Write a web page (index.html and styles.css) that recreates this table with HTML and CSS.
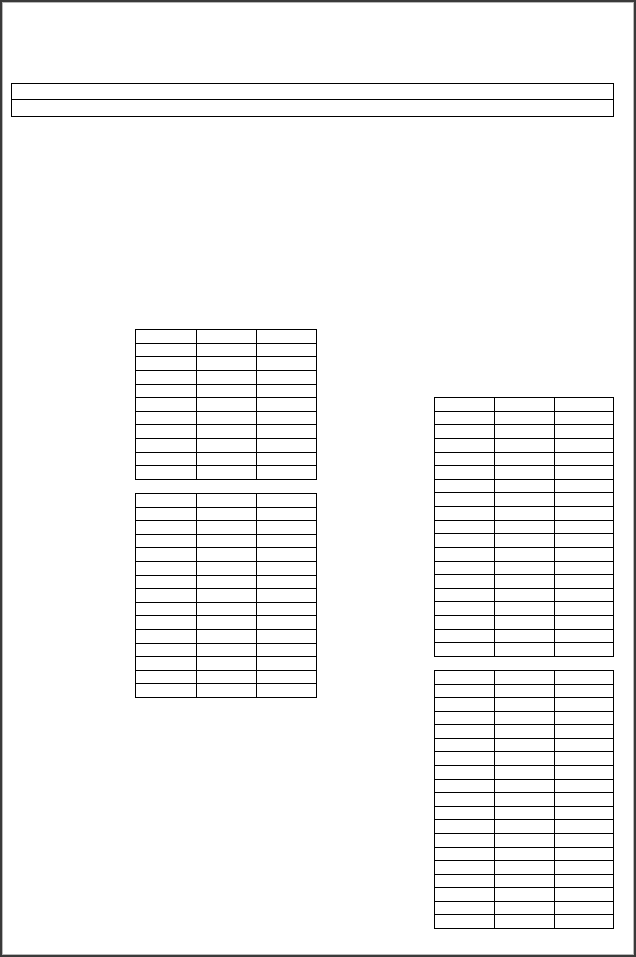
FILE: index.html
```html
<!DOCTYPE html>
<html>
<head>
<meta charset="utf-8">
<link rel="stylesheet" href="styles.css">
</head>
<body>
<div class="page">
  <div class="bar">
    <div class="bar-row r1"></div>
    <div class="bar-row r2"></div>
  </div>
  <div class="columns">
    <div class="col left">
      <div class="grid g-left rows-11">
        <div></div><div></div><div></div>
        <div></div><div></div><div></div>
        <div></div><div></div><div></div>
        <div></div><div></div><div></div>
        <div></div><div></div><div></div>
        <div></div><div></div><div></div>
        <div></div><div></div><div></div>
        <div></div><div></div><div></div>
        <div></div><div></div><div></div>
        <div></div><div></div><div></div>
        <div></div><div></div><div></div>
      </div>
      <div class="grid g-left rows-15">
        <div></div><div></div><div></div>
        <div></div><div></div><div></div>
        <div></div><div></div><div></div>
        <div></div><div></div><div></div>
        <div></div><div></div><div></div>
        <div></div><div></div><div></div>
        <div></div><div></div><div></div>
        <div></div><div></div><div></div>
        <div></div><div></div><div></div>
        <div></div><div></div><div></div>
        <div></div><div></div><div></div>
        <div></div><div></div><div></div>
        <div></div><div></div><div></div>
        <div></div><div></div><div></div>
        <div></div><div></div><div></div>
      </div>
    </div>
    <div class="col right">
      <div class="grid g-right rows-19a">
        <div></div><div></div><div></div>
        <div></div><div></div><div></div>
        <div></div><div></div><div></div>
        <div></div><div></div><div></div>
        <div></div><div></div><div></div>
        <div></div><div></div><div></div>
        <div></div><div></div><div></div>
        <div></div><div></div><div></div>
        <div></div><div></div><div></div>
        <div></div><div></div><div></div>
        <div></div><div></div><div></div>
        <div></div><div></div><div></div>
        <div></div><div></div><div></div>
        <div></div><div></div><div></div>
        <div></div><div></div><div></div>
        <div></div><div></div><div></div>
        <div></div><div></div><div></div>
        <div></div><div></div><div></div>
        <div></div><div></div><div></div>
      </div>
      <div class="grid g-right rows-19b">
        <div></div><div></div><div></div>
        <div></div><div></div><div></div>
        <div></div><div></div><div></div>
        <div></div><div></div><div></div>
        <div></div><div></div><div></div>
        <div></div><div></div><div></div>
        <div></div><div></div><div></div>
        <div></div><div></div><div></div>
        <div></div><div></div><div></div>
        <div></div><div></div><div></div>
        <div></div><div></div><div></div>
        <div></div><div></div><div></div>
        <div></div><div></div><div></div>
        <div></div><div></div><div></div>
        <div></div><div></div><div></div>
        <div></div><div></div><div></div>
        <div></div><div></div><div></div>
        <div></div><div></div><div></div>
        <div></div><div></div><div></div>
      </div>
    </div>
  </div>
</div>
</body>
</html>
```

FILE: styles.css
```css
* {
  box-sizing: border-box;
}

html, body {
  margin: 0;
  padding: 0;
  background: #ffffff;
  font-family: "Liberation Sans", Arial, sans-serif;
}

.page {
  width: 636px;
  height: 957px;
  border: 2px solid #3a3a3a;
  box-shadow: inset 1px 1px 0 #b8b8b8, inset -1px -1px 0 #b8b8b8;
  padding: 81px 0 0 9px;
  background: #ffffff;
  overflow: hidden;
}

.bar {
  width: 603px;
  border-top: 1px solid #000;
  border-left: 1px solid #000;
  display: flex;
  flex-direction: column;
}

.bar-row {
  border-right: 1px solid #000;
  border-bottom: 1px solid #000;
}

.bar-row.r1 {
  height: 16px;
}

.bar-row.r2 {
  height: 17px;
}

.columns {
  display: flex;
  align-items: flex-start;
  margin-top: 212px;
}

.col {
  display: flex;
  flex-direction: column;
  gap: 13px;
}

.col.left {
  margin-left: 124px;
}

.col.right {
  margin-left: 117px;
  margin-top: 68px;
}

.grid {
  display: grid;
  border-top: 1px solid #000;
  border-left: 1px solid #000;
}

.grid > div {
  border-right: 1px solid #000;
  border-bottom: 1px solid #000;
}

.g-left {
  width: 182px;
  grid-template-columns: 61px 60px 60px;
}

.g-right {
  width: 180px;
  grid-template-columns: 60px 60px 59px;
}

.rows-11 {
  height: 151px;
  grid-template-rows: repeat(11, 1fr);
}

.rows-15 {
  height: 205px;
  grid-template-rows: repeat(15, 1fr);
}

.rows-19a {
  height: 260px;
  grid-template-rows: repeat(19, 1fr);
}

.rows-19b {
  height: 259px;
  grid-template-rows: repeat(19, 1fr);
}
```
